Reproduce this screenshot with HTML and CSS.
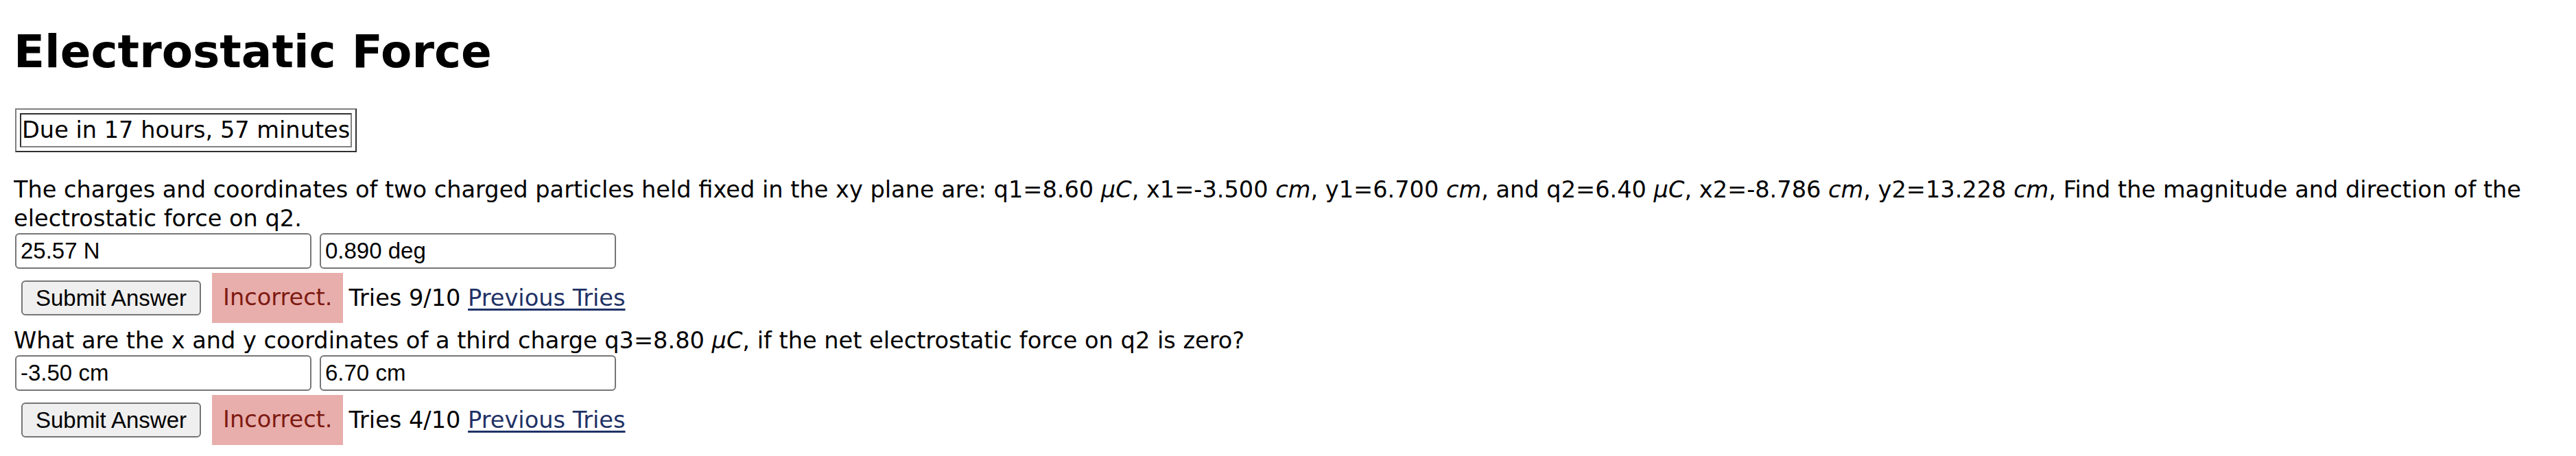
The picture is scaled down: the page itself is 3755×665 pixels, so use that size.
FILE: index.html
```html
<!DOCTYPE html>
<html>
<head>
<meta charset="utf-8">
<title>Electrostatic Force</title>
<link rel="stylesheet" href="styles.css">
</head>
<body>
<h1 class="title">Electrostatic Force</h1>
<div class="due"><div class="due-cell">Due in 17 hours, 57 minutes</div></div>
<div class="problem">
  <p class="question">The charges and coordinates of two charged particles held fixed in the xy plane are: q1=8.60 <i>μC</i>, x1=-3.500 <i>cm</i>, y1=6.700 <i>cm</i>, and q2=6.40 <i>μC</i>, x2=-8.786 <i>cm</i>, y2=13.228 <i>cm</i>, Find the magnitude and direction of the electrostatic force on q2.</p>
  <div class="inputs">
    <input class="answer" type="text" value="25.57 N">
    <input class="answer" type="text" value="0.890 deg">
  </div>
  <div class="status">
    <button class="submit" type="button">Submit Answer</button>
    <span class="incorrect">Incorrect.</span>
    <span class="tries">Tries 9/10 <a class="prev" href="#">Previous Tries</a></span>
  </div>
  <p class="question">What are the x and y coordinates of a third charge q3=8.80 <i>μC</i>, if the net electrostatic force on q2 is zero?</p>
  <div class="inputs">
    <input class="answer" type="text" value="-3.50 cm">
    <input class="answer" type="text" value="6.70 cm">
  </div>
  <div class="status">
    <button class="submit" type="button">Submit Answer</button>
    <span class="incorrect">Incorrect.</span>
    <span class="tries">Tries 4/10 <a class="prev" href="#">Previous Tries</a></span>
  </div>
</div>
</body>
</html>
```
FILE: styles.css
```css
html, body {
  background: #ffffff;
}
body {
  margin: 20px;
  font-family: "DejaVu Sans", Verdana, sans-serif;
  font-size: 33.6px;
  color: #000000;
}
.title {
  font-size: 66px;
  font-weight: bold;
  margin: 23px 0 49px 0;
  line-height: 66px;
}
.due {
  display: inline-block;
  border: 2px solid;
  border-color: #808080 #303030 #303030 #808080;
  padding: 5px;
  margin-left: 2px;
}
.due-cell {
  border: 2px solid;
  border-color: #303030 #808080 #808080 #303030;
  padding: 4px 1px;
  line-height: 38px;
}
.problem {
  margin-top: 34px;
}
.question {
  margin: 0;
  line-height: 42px;
}
.inputs {
  display: flex;
  gap: 12px;
  margin-left: 2px;
}
.answer {
  width: 432px;
  height: 52px;
  box-sizing: border-box;
  border: 2px solid #767676;
  border-radius: 6px;
  padding: 0 6px;
  font-family: "Liberation Sans", Arial, sans-serif;
  font-size: 33px;
  color: #000;
  background: #fff;
  margin: 0;
}
.status {
  display: flex;
  align-items: center;
  margin-top: 6px;
  margin-bottom: 5px;
}
.submit {
  margin: 0 0 0 11px;
  width: 262px;
  height: 51px;
  box-sizing: border-box;
  border: 2px solid #767676;
  border-radius: 6px;
  background: #efefef;
  font-family: "Liberation Sans", Arial, sans-serif;
  font-size: 33px;
  color: #000;
  padding: 0;
}
.incorrect {
  margin-left: 16px;
  background: #e8aeac;
  color: #7d1a12;
  padding: 17px 16px 18px 16px;
  line-height: 38px;
}
.tries {
  margin-left: 8px;
  line-height: 38px;
}
.prev {
  color: #1f3266;
  text-decoration: underline;
  text-decoration-thickness: 3px;
  text-underline-offset: 4px;
}
```
